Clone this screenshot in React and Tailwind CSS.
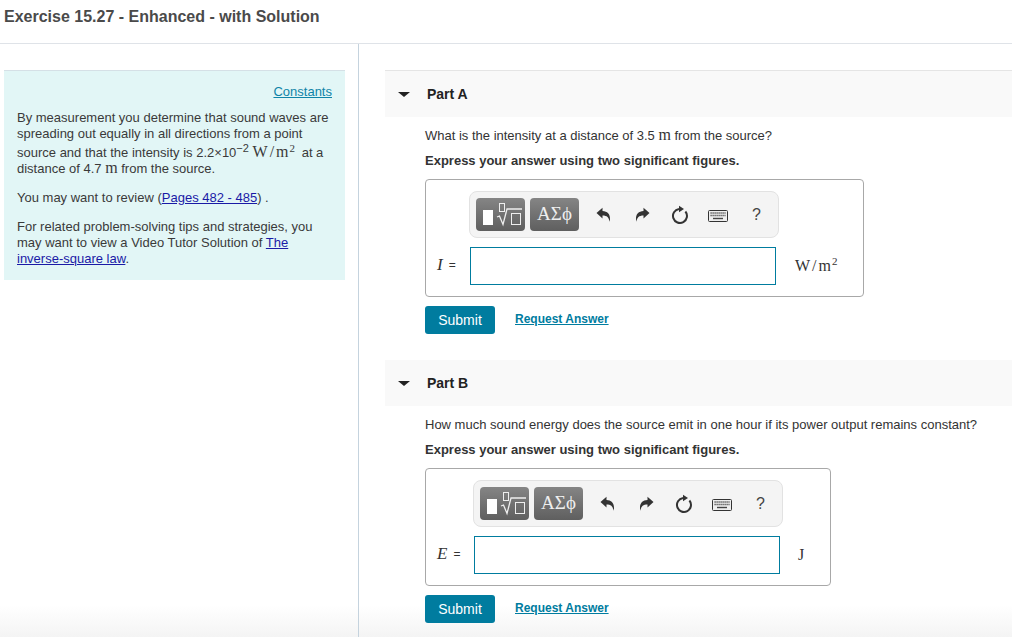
import React from "react";

const sans = "font-['Liberation_Sans',Arial,sans-serif]";
const serif = "font-['Liberation_Serif','Times_New_Roman',serif]";

const TemplateIcon = () => (
  <svg width="49" height="33" viewBox="0 0 49 33" fill="none">
    <rect x="7" y="12" width="10" height="15" fill="#fff" />
    <rect x="23.5" y="5.5" width="5" height="8" stroke="#eee" />
    <path d="M21 19l2.5-1 3.5 8.500 4-15.500h15" stroke="#eee" strokeWidth="1.300" />
    <rect x="35.500" y="15.500" width="9" height="11" stroke="#eee" />
  </svg>
);

const UndoIcon = ({ flip }) => (
  <svg
    width="15"
    height="15"
    viewBox="0 0 15 15"
    className={flip ? "-scale-x-100" : ""}
  >
    <path
      d="M.5 6 6.500.8v3.200c4.800.2 7.700 3 7.500 8.200-.1 1-.4 1.800-.7 2.500-.1-4.300-2.300-6.300-6.800-6.300v3.100z"
      fill="#333"
    />
  </svg>
);

const ReloadIcon = () => (
  <svg width="18" height="19" viewBox="0 0 18 19" fill="none">
    <path d="M14.400 6.500A7 7 0 1 1 8 4" stroke="#333" strokeWidth="2" />
    <path d="M8 .8v6.400l5-3.200z" fill="#333" />
  </svg>
);

const KeyboardIcon = () => (
  <svg width="20" height="12" viewBox="0 0 20 12" fill="none">
    <rect x=".5" y=".5" width="19" height="11" rx="1" fill="#eee" stroke="#333" />
    <path
      d="M2.500 3h15M2.500 5.500h15"
      stroke="#444"
      strokeWidth="1.300"
      strokeDasharray="1.200 .8"
    />
    <path d="M5 8.500h10" stroke="#444" strokeWidth="1.400" />
  </svg>
);

// W/m² set in the same wide way as the reference's math font
const WattsPerArea = () => (
  <span className={`text-[16px] leading-[10px] ${serif}`}>
    W<span className="mx-[2px]">/</span>m
    <sup className="ml-[1px] text-[11px] leading-none">2</sup>
  </span>
);

const Toolbar = () => (
  <div className="w-[310px] h-[47px] flex items-center pl-[6px] bg-[#f4f4f4] border border-[#e2e2e2] rounded-lg">
    <div className="w-[49px] h-[33px] rounded-[4px] bg-gradient-to-b from-[#858585] to-[#5f5f5f]">
      <TemplateIcon />
    </div>
    <div
      className={`w-[49px] h-[33px] ml-[5px] rounded-[4px] bg-gradient-to-b from-[#858585] to-[#5f5f5f] flex items-center justify-center text-[19px] text-[#eee] ${serif}`}
    >
      ΑΣϕ
    </div>
    <div className="w-[18px] ml-[15px] flex justify-center">
      <UndoIcon />
    </div>
    <div className="w-[18px] ml-[21px] flex justify-center">
      <UndoIcon flip />
    </div>
    <div className="w-[18px] ml-[20px] flex justify-center">
      <ReloadIcon />
    </div>
    <div className="w-[20px] ml-[19px] flex justify-center mt-[2px]">
      <KeyboardIcon />
    </div>
    <div className={`ml-[24px] text-[16px] text-[#444] ${sans}`}>?</div>
  </div>
);

const Part = ({ title, question, symbol, unit, boxWidth, offset, className }) => (
  <section className={className}>
    <div className="h-[46px] flex items-center bg-[#f9f9f9] pl-[13px]">
      <div className="w-0 h-0 border-x-[6px] border-x-transparent border-t-[5px] border-t-[#222]" />
      <h2 className="ml-[17px] text-[14px] font-bold text-[#222]">{title}</h2>
    </div>

    <div className="pl-[40px]">
      <p className="mt-[11px] h-[15px] leading-[15px] text-[13px] text-[#333]">
        {question}
      </p>
      <p className="mt-[10px] h-[15px] leading-[15px] text-[13px] font-bold text-[#333]">
        Express your answer using two significant figures.
      </p>

      {/* answer box */}
      <div
        className={`mt-[11px] h-[118px] pt-[11px] border border-[#a8a8a8] rounded ${boxWidth}`}
      >
        <div className={offset.toolbar}>
          <Toolbar />
        </div>
        <div className="flex items-center mt-[9px] h-[38px]">
          <div className={`pl-[11px] -mt-[2px] flex items-center text-[#333] ${offset.label}`}>
            <span className={`italic text-[17px] ${serif}`}>{symbol}</span>
            <span className="ml-[6px] text-[12px]">=</span>
          </div>
          <div className="w-[306px] h-[38px] border border-[#007c9f] bg-white" />
          <div className={`${offset.unit} -mt-[1px] text-[16px] text-[#333] ${serif}`}>
            {unit}
          </div>
        </div>
      </div>

      {/* actions */}
      <div className="mt-[9px] flex items-center">
        <button className="w-[70px] h-[28px] rounded-[3px] bg-[#007c9f] text-white text-[14px]">
          Submit
        </button>
        <a className="ml-[20px] -mt-[3px] text-[12px] font-bold text-[#007c9f] underline">
          Request Answer
        </a>
      </div>
    </div>
  </section>
);

const App = () => {
  return (
    <div
      className={`h-[637px] overflow-hidden bg-gradient-to-b from-white from-[95%] to-[#f4f4f4] ${sans}`}
    >
      <header className="h-[44px] border-b border-[#dfe3e8] pl-[4px] pt-[7px]">
        <h1 className="text-[16px] leading-[20px] font-bold text-[#4a4a4a]">
          Exercise 15.27 - Enhanced - with Solution
        </h1>
      </header>

      <div className="flex h-[593px]">
        {/* left panel */}
        <aside className="w-[359px] shrink-0 border-r border-[#c5d3de] pt-[26px] pl-[4px]">
          <div className="w-[341px] h-[210px] bg-[#e2f6f6] border-t border-[#d5e0e6] px-[13px] pt-[13px] text-[13px] leading-[16px] text-[#3a3a3a]">
            <div className="text-right">
              <a className="text-[#0f84a8] underline">Constants</a>
            </div>
            <p className="mt-[10px]">
              By measurement you determine that sound waves are spreading out
              equally in all directions from a point source and that the
              intensity is <span className="inline-block w-0 h-[15px]" />
              2.2×10
              <sup className="text-[11px] leading-none">−2</sup>{" "}
              <WattsPerArea />{" "}
              <span className="ml-[3px]">at a</span> distance of 4.7{" "}
              <span className={`text-[16px] leading-[10px] ${serif}`}>m</span> from the
              source.
            </p>
            <p className="mt-[13px]">
              You may want to review (
              <a className="text-[#1a1aa6] underline">Pages 482 - 485</a>) .
            </p>
            <p className="mt-[13px]">
              For related problem-solving tips and strategies, you may want to
              view a Video Tutor Solution of{" "}
              <a className="text-[#1a1aa6] underline">The inverse-square law</a>.
            </p>
          </div>
        </aside>

        {/* parts */}
        <main className="flex-1 pl-[26px] pt-[26px]">
          <Part
            className="border-t border-[#e5e5e5]"
            title="Part A"
            question={
              <>
                What is the intensity at a distance of 3.5{" "}
                <span className={`text-[16px] leading-[10px] ${serif}`}>m</span> from the source?
              </>
            }
            symbol="I"
            unit={<WattsPerArea />}
            boxWidth="w-[439px]"
            offset={{ toolbar: "ml-[43px]", label: "w-[44px]", unit: "ml-[19px]" }}
          />
          <Part
            className="mt-[26px]"
            title="Part B"
            question="How much sound energy does the source emit in one hour if its power output remains constant?"
            symbol="E"
            unit="J"
            boxWidth="w-[406px]"
            offset={{ toolbar: "ml-[47px]", label: "w-[48px]", unit: "ml-[18px]" }}
          />
        </main>
      </div>
    </div>
  );
};

export default App;
